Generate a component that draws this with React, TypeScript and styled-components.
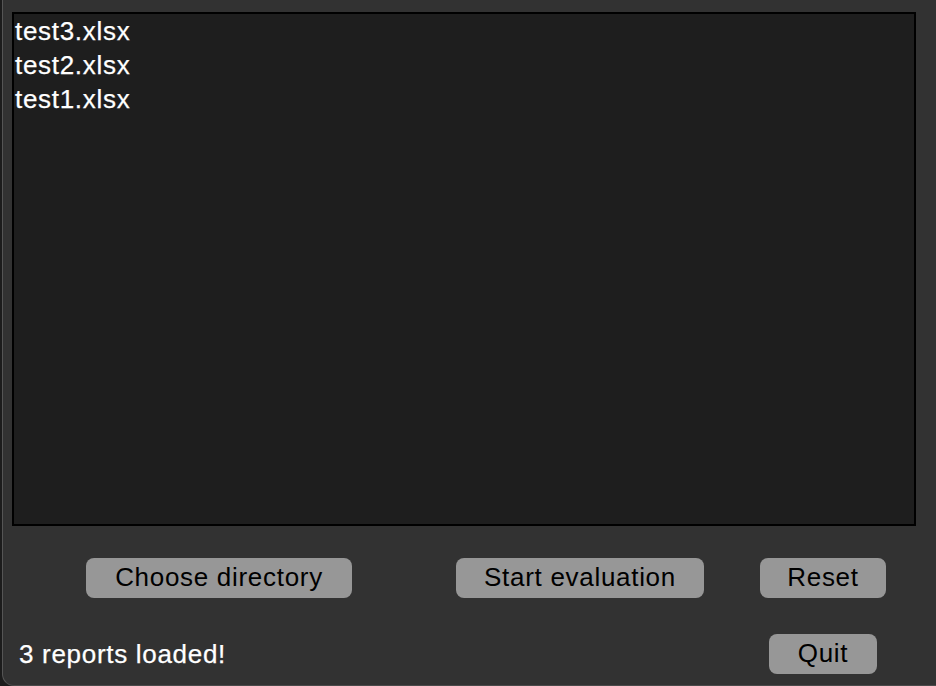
import React from "react";
import styled, { createGlobalStyle } from "styled-components";

const Global = createGlobalStyle`
  html, body {
    margin: 0;
    padding: 0;
    background: #1c1c1c;
    overflow: hidden;
  }
  body {
    font-family: "Liberation Sans", Arial, sans-serif;
  }
`;

const Stage = styled.div`
  width: 936px;
  height: 686px;
  padding-left: 2px;
  box-sizing: border-box;
  overflow: hidden;
`;

const Window = styled.div`
  width: 960px;
  height: 686px;
  box-sizing: border-box;
  background: #323232;
  border-left: 1px solid #555555;
  border-bottom: 1px solid #4a4a4a;
  border-bottom-left-radius: 12px;
  padding: 12px 0 0 9px;
  display: flex;
  flex-direction: column;
`;

const ListBox = styled.div`
  width: 904px;
  height: 514px;
  box-sizing: border-box;
  border: 2px solid #000000;
  background: #1e1e1e;
  padding: 0 0 0 1px;
  display: flex;
  flex-direction: column;
`;

const FileItem = styled.div`
  color: #ffffff;
  font-size: 26px;
  line-height: 34px;
  letter-spacing: 0.7px;
  -webkit-text-stroke: 0.25px #ffffff;
`;

const Controls = styled.div`
  display: grid;
  grid-template-columns: 414px 308px 178px;
  grid-auto-rows: 40px;
  row-gap: 36px;
  margin-top: 32px;
  justify-items: center;
  align-items: center;
`;

const Button = styled.button<{ $w: number }>`
  width: ${(p) => p.$w}px;
  height: 40px;
  border: none;
  border-radius: 8px;
  background: #979797;
  color: #000000;
  font-family: "Liberation Sans", Arial, sans-serif;
  font-size: 26px;
  letter-spacing: 0.7px;
  padding: 0 0 2px 0;
  display: flex;
  align-items: center;
  justify-content: center;
`;

const Status = styled.div`
  justify-self: start;
  margin-left: 7px;
  color: #ffffff;
  font-size: 26px;
  letter-spacing: 0.7px;
  -webkit-text-stroke: 0.25px #ffffff;
`;

const Spacer = styled.div``;

export default function App() {
  const files = ["test3.xlsx", "test2.xlsx", "test1.xlsx"];
  return (
    <>
      <Global />
      <Stage>
        <Window>
          <ListBox>
            {files.map((f) => (
              <FileItem key={f}>{f}</FileItem>
            ))}
          </ListBox>
          <Controls>
            <Button $w={266}>Choose directory</Button>
            <Button $w={248}>Start evaluation</Button>
            <Button $w={126}>Reset</Button>
            <Status>3 reports loaded!</Status>
            <Spacer />
            <Button $w={108}>Quit</Button>
          </Controls>
        </Window>
      </Stage>
    </>
  );
}
